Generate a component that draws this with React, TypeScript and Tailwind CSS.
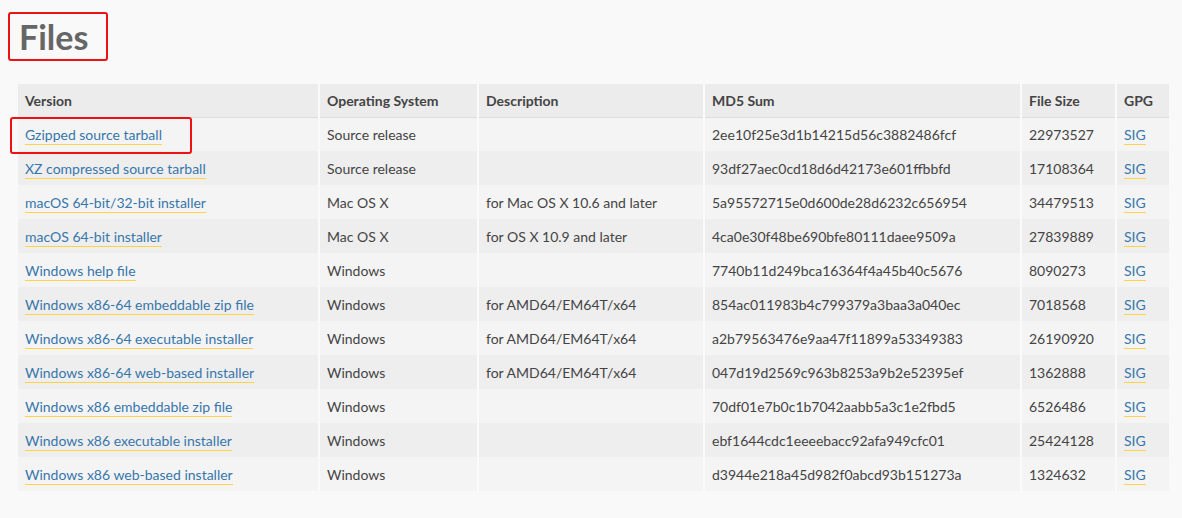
import React from "react";

type FileRow = {
    version: string;
    os: string;
    description: string;
    md5: string;
    size: string;
};

const rows: FileRow[] = [
    {version: "Gzipped source tarball", os: "Source release", description: "", md5: "2ee10f25e3d1b14215d56c3882486fcf", size: "22973527"},
    {version: "XZ compressed source tarball", os: "Source release", description: "", md5: "93df27aec0cd18d6d42173e601ffbbfd", size: "17108364"},
    {version: "macOS 64-bit/32-bit installer", os: "Mac OS X", description: "for Mac OS X 10.6 and later", md5: "5a95572715e0d600de28d6232c656954", size: "34479513"},
    {version: "macOS 64-bit installer", os: "Mac OS X", description: "for OS X 10.9 and later", md5: "4ca0e30f48be690bfe80111daee9509a", size: "27839889"},
    {version: "Windows help file", os: "Windows", description: "", md5: "7740b11d249bca16364f4a45b40c5676", size: "8090273"},
    {version: "Windows x86-64 embeddable zip file", os: "Windows", description: "for AMD64/EM64T/x64", md5: "854ac011983b4c799379a3baa3a040ec", size: "7018568"},
    {version: "Windows x86-64 executable installer", os: "Windows", description: "for AMD64/EM64T/x64", md5: "a2b79563476e9aa47f11899a53349383", size: "26190920"},
    {version: "Windows x86-64 web-based installer", os: "Windows", description: "for AMD64/EM64T/x64", md5: "047d19d2569c963b8253a9b2e52395ef", size: "1362888"},
    {version: "Windows x86 embeddable zip file", os: "Windows", description: "", md5: "70df01e7b0c1b7042aabb5a3c1e2fbd5", size: "6526486"},
    {version: "Windows x86 executable installer", os: "Windows", description: "", md5: "ebf1644cdc1eeeebacc92afa949cfc01", size: "25424128"},
    {version: "Windows x86 web-based installer", os: "Windows", description: "", md5: "d3944e218a45d982f0abcd93b151273a", size: "1324632"},
];

function FileLink({text}: { text: string }) {
    return (
        <a href="#" className="text-[#3776ab] border-b border-[#ffd343] pb-px">{text}</a>
    );
}

export default function App() {
    return (
        <div className="min-h-[518px] bg-[#f9f9f9] pt-3 text-[#444] font-['Lato',sans-serif]">

            <div className="ml-2 w-[100px] h-[49px] border-2 border-[#ee1111] rounded-[3px] pl-[9px] flex items-center">
                <h1 className="text-[34px] font-bold text-[#666] leading-none">Files</h1>
            </div>

            <table className="ml-[18px] mt-[23px] w-[1151px] border-collapse text-[14px] table-fixed">
                <colgroup>
                    <col className="w-[301px]"/>
                    <col className="w-[159px]"/>
                    <col className="w-[226px]"/>
                    <col className="w-[317px]"/>
                    <col className="w-[95px]"/>
                    <col className="w-[53px]"/>
                </colgroup>
                <thead>
                <tr className="bg-[#ececec] h-[33px] border-b border-[#dddddd] text-left text-[#444]">
                    <th className="px-[7px] border-r-2 border-[#fafafa] font-bold">Version</th>
                    <th className="px-[7px] border-r-2 border-[#fafafa] font-bold">Operating System</th>
                    <th className="px-[7px] border-r-2 border-[#fafafa] font-bold">Description</th>
                    <th className="px-[7px] border-r-2 border-[#fafafa] font-bold">MD5 Sum</th>
                    <th className="px-[7px] border-r-2 border-[#fafafa] font-bold">File Size</th>
                    <th className="px-[7px] font-bold">GPG</th>
                </tr>
                </thead>
                <tbody>
                {rows.map((row, index) => (
                    <tr key={index} className={`h-[34px] ${index % 2 === 0 ? "bg-[#f4f4f4]" : "bg-[#eeeeee]"}`}>
                        <td className="relative px-[7px] border-r-2 border-[#fafafa] whitespace-nowrap">
                            <FileLink text={row.version}/>
                            {index === 0 ?
                                <span className="absolute -left-2 -top-px w-[182px] h-[37px] border-2 border-[#ee1111] rounded-[3px]"/> : <></>}
                        </td>
                        <td className="px-[7px] border-r-2 border-[#fafafa] whitespace-nowrap">{row.os}</td>
                        <td className="px-[7px] border-r-2 border-[#fafafa] whitespace-nowrap">{row.description}</td>
                        <td className="px-[7px] border-r-2 border-[#fafafa] whitespace-nowrap">{row.md5}</td>
                        <td className="px-[7px] border-r-2 border-[#fafafa] whitespace-nowrap">{row.size}</td>
                        <td className="px-[7px] whitespace-nowrap"><FileLink text="SIG"/></td>
                    </tr>
                ))}
                </tbody>
            </table>

        </div>
    )
}
